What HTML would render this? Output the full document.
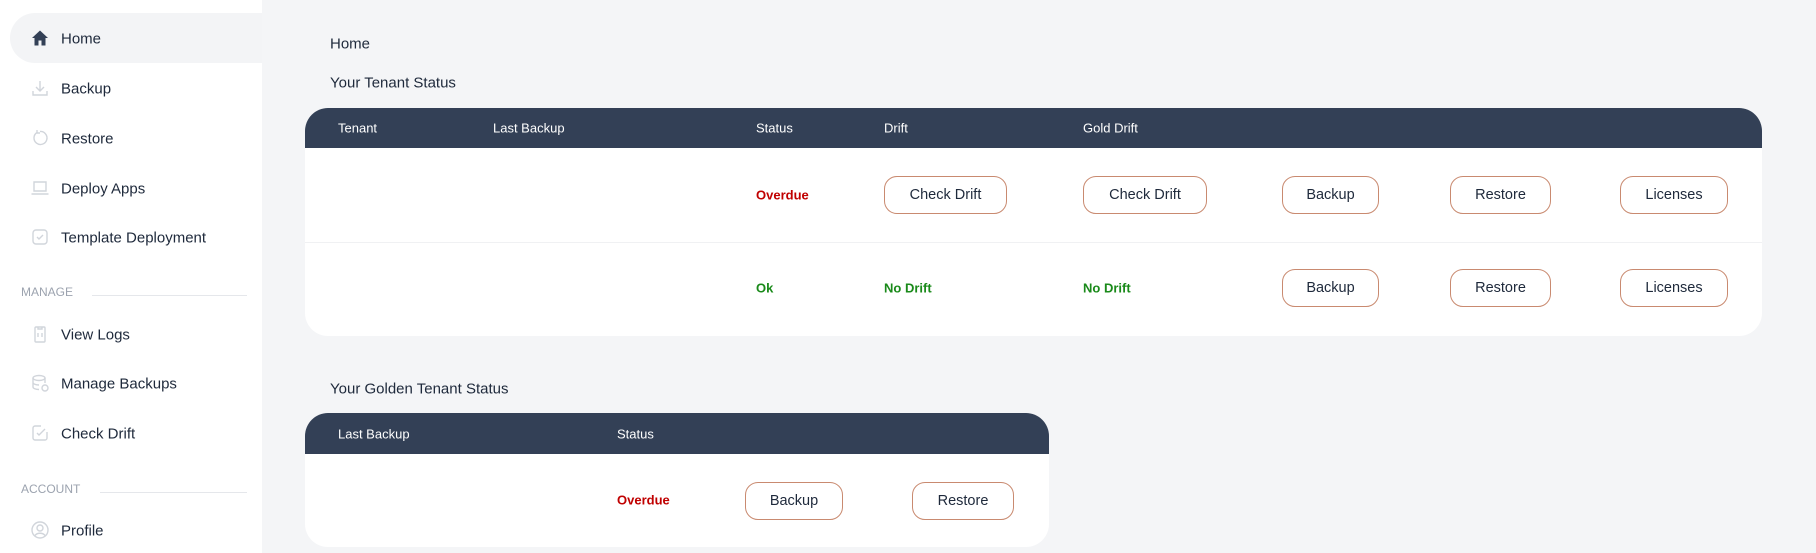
<!DOCTYPE html>
<html><head><style>
*{margin:0;padding:0;box-sizing:border-box}
body{width:1816px;height:553px;background:#f4f5f7;font-family:"Liberation Sans",sans-serif;position:relative;overflow:hidden;color:#1e293b}
.sb{position:absolute;left:0;top:0;width:262px;height:553px;background:#fff}
.act{position:absolute;left:10px;top:13px;width:252px;height:50px;background:#f3f4f6;border-radius:25px 0 0 25px}
.it{position:absolute;left:61px;font-size:15px;color:#1e293b;transform:translateY(-45%)}
.ic{position:absolute;left:30px;width:20px;height:20px;transform:translateY(-50%)}
.sec{position:absolute;left:21px;font-size:12px;color:#9ca3af;transform:translateY(-50%)}
.ln{position:absolute;height:1px;background:#e5e7eb;right:15px}
.t{position:absolute;font-size:15px;color:#1e293b;transform:translateY(-45%)}
.card{position:absolute;background:#fff;border-radius:23px;overflow:hidden}
.hd{position:absolute;left:0;right:0;top:0;background:#334056}
.h{position:absolute;color:#fff;font-size:13px;transform:translateY(-50%)}
.btn{position:absolute;height:38px;border:1.5px solid #c98a70;border-radius:13px;background:#fff;font-size:14.5px;color:#1e293b;display:flex;align-items:center;justify-content:center}
.red{position:absolute;color:#c00000;font-weight:bold;font-size:13px;transform:translateY(-50%)}
.grn{position:absolute;color:#1a8a1a;font-weight:bold;font-size:13px;transform:translateY(-50%)}
</style></head><body>
<div class="sb">
<div class="act"></div>
<svg class="ic" style="top:38px" viewBox="0 0 20 20"><path d="M2 10L10 2.5 18 10h-2.5v7.5h-4v-5h-3v5h-4V10z" fill="#334056"/></svg>
<div class="it" style="top:38px">Home</div>
<svg class="ic" style="top:88px" viewBox="0 0 20 20" fill="none" stroke="#d1d5db" stroke-width="1.4"><path d="M10 3v10M6 9l4 4 4-4M3 13v4h14v-4"/></svg>
<div class="it" style="top:88px">Backup</div>
<svg class="ic" style="top:138px" viewBox="0 0 20 20" fill="none" stroke="#d1d5db" stroke-width="1.4"><path d="M7 4.5A6.5 6.5 0 1 0 10 3.5M7 2v3h3"/></svg>
<div class="it" style="top:138px">Restore</div>
<svg class="ic" style="top:188px" viewBox="0 0 20 20" fill="none" stroke="#d1d5db" stroke-width="1.4"><path d="M4 4h12v9H4zM1.5 16h17"/></svg>
<div class="it" style="top:188px">Deploy Apps</div>
<svg class="ic" style="top:237px" viewBox="0 0 20 20" fill="none" stroke="#d1d5db" stroke-width="1.4"><rect x="3" y="3" width="14" height="14" rx="3"/><path d="M7 10l2 2 4-4"/></svg>
<div class="it" style="top:237px">Template Deployment</div>
<div class="sec" style="top:292px">MANAGE</div><div class="ln" style="top:295px;left:92px"></div>
<svg class="ic" style="top:334px" viewBox="0 0 20 20" fill="none" stroke="#d1d5db" stroke-width="1.4"><rect x="5" y="3" width="10" height="15" rx="1"/><path d="M8 3v2h4V3M8 9v4M12 9v4"/></svg>
<div class="it" style="top:334px">View Logs</div>
<svg class="ic" style="top:383px" viewBox="0 0 20 20" fill="none" stroke="#d1d5db" stroke-width="1.4"><ellipse cx="9" cy="5" rx="6" ry="2.5"/><path d="M3 5v9c0 1.4 2.7 2.5 6 2.5M15 5v5M3 9.5c0 1.4 2.7 2.5 6 2.5"/><circle cx="15" cy="15" r="3"/></svg>
<div class="it" style="top:383px">Manage Backups</div>
<svg class="ic" style="top:433px" viewBox="0 0 20 20" fill="none" stroke="#d1d5db" stroke-width="1.4"><path d="M17 9v6a2 2 0 0 1-2 2H5a2 2 0 0 1-2-2V5a2 2 0 0 1 2-2h6M7 10l2 2 6-6"/></svg>
<div class="it" style="top:433px">Check Drift</div>
<div class="sec" style="top:489px">ACCOUNT</div><div class="ln" style="top:492px;left:100px"></div>
<svg class="ic" style="top:530px" viewBox="0 0 20 20" fill="none" stroke="#d1d5db" stroke-width="1.4"><circle cx="10" cy="10" r="8"/><circle cx="10" cy="8" r="3"/><path d="M5 15.5c2-3 8-3 10 0"/></svg>
<div class="it" style="top:530px">Profile</div>
</div>

<div class="t" style="left:330px;top:43px">Home</div>
<div class="t" style="left:330px;top:82px">Your Tenant Status</div>
<div class="card" style="left:305px;top:108px;width:1457px;height:228px">
<div class="hd" style="height:40px"></div>
<div class="h" style="left:33px;top:20px">Tenant</div>
<div class="h" style="left:188px;top:20px">Last Backup</div>
<div class="h" style="left:451px;top:20px">Status</div>
<div class="h" style="left:579px;top:20px">Drift</div>
<div class="h" style="left:778px;top:20px">Gold Drift</div>
<div style="position:absolute;left:0;right:0;top:134px;height:1px;background:#f0f1f3"></div>
<div class="red" style="left:451px;top:87px">Overdue</div>
<div class="btn" style="left:579px;top:68px;width:123px">Check Drift</div>
<div class="btn" style="left:778px;top:68px;width:124px">Check Drift</div>
<div class="btn" style="left:977px;top:68px;width:97px">Backup</div>
<div class="btn" style="left:1145px;top:68px;width:101px">Restore</div>
<div class="btn" style="left:1315px;top:68px;width:108px">Licenses</div>
<div class="grn" style="left:451px;top:180px">Ok</div>
<div class="grn" style="left:579px;top:180px">No Drift</div>
<div class="grn" style="left:778px;top:180px">No Drift</div>
<div class="btn" style="left:977px;top:161px;width:97px">Backup</div>
<div class="btn" style="left:1145px;top:161px;width:101px">Restore</div>
<div class="btn" style="left:1315px;top:161px;width:108px">Licenses</div>
</div>

<div class="t" style="left:330px;top:388px">Your Golden Tenant Status</div>
<div class="card" style="left:305px;top:413px;width:744px;height:134px">
<div class="hd" style="height:41px"></div>
<div class="h" style="left:33px;top:21px">Last Backup</div>
<div class="h" style="left:312px;top:21px">Status</div>
<div class="red" style="left:312px;top:87px">Overdue</div>
<div class="btn" style="left:440px;top:69px;width:98px">Backup</div>
<div class="btn" style="left:607px;top:69px;width:102px">Restore</div>
</div>
</body></html>
